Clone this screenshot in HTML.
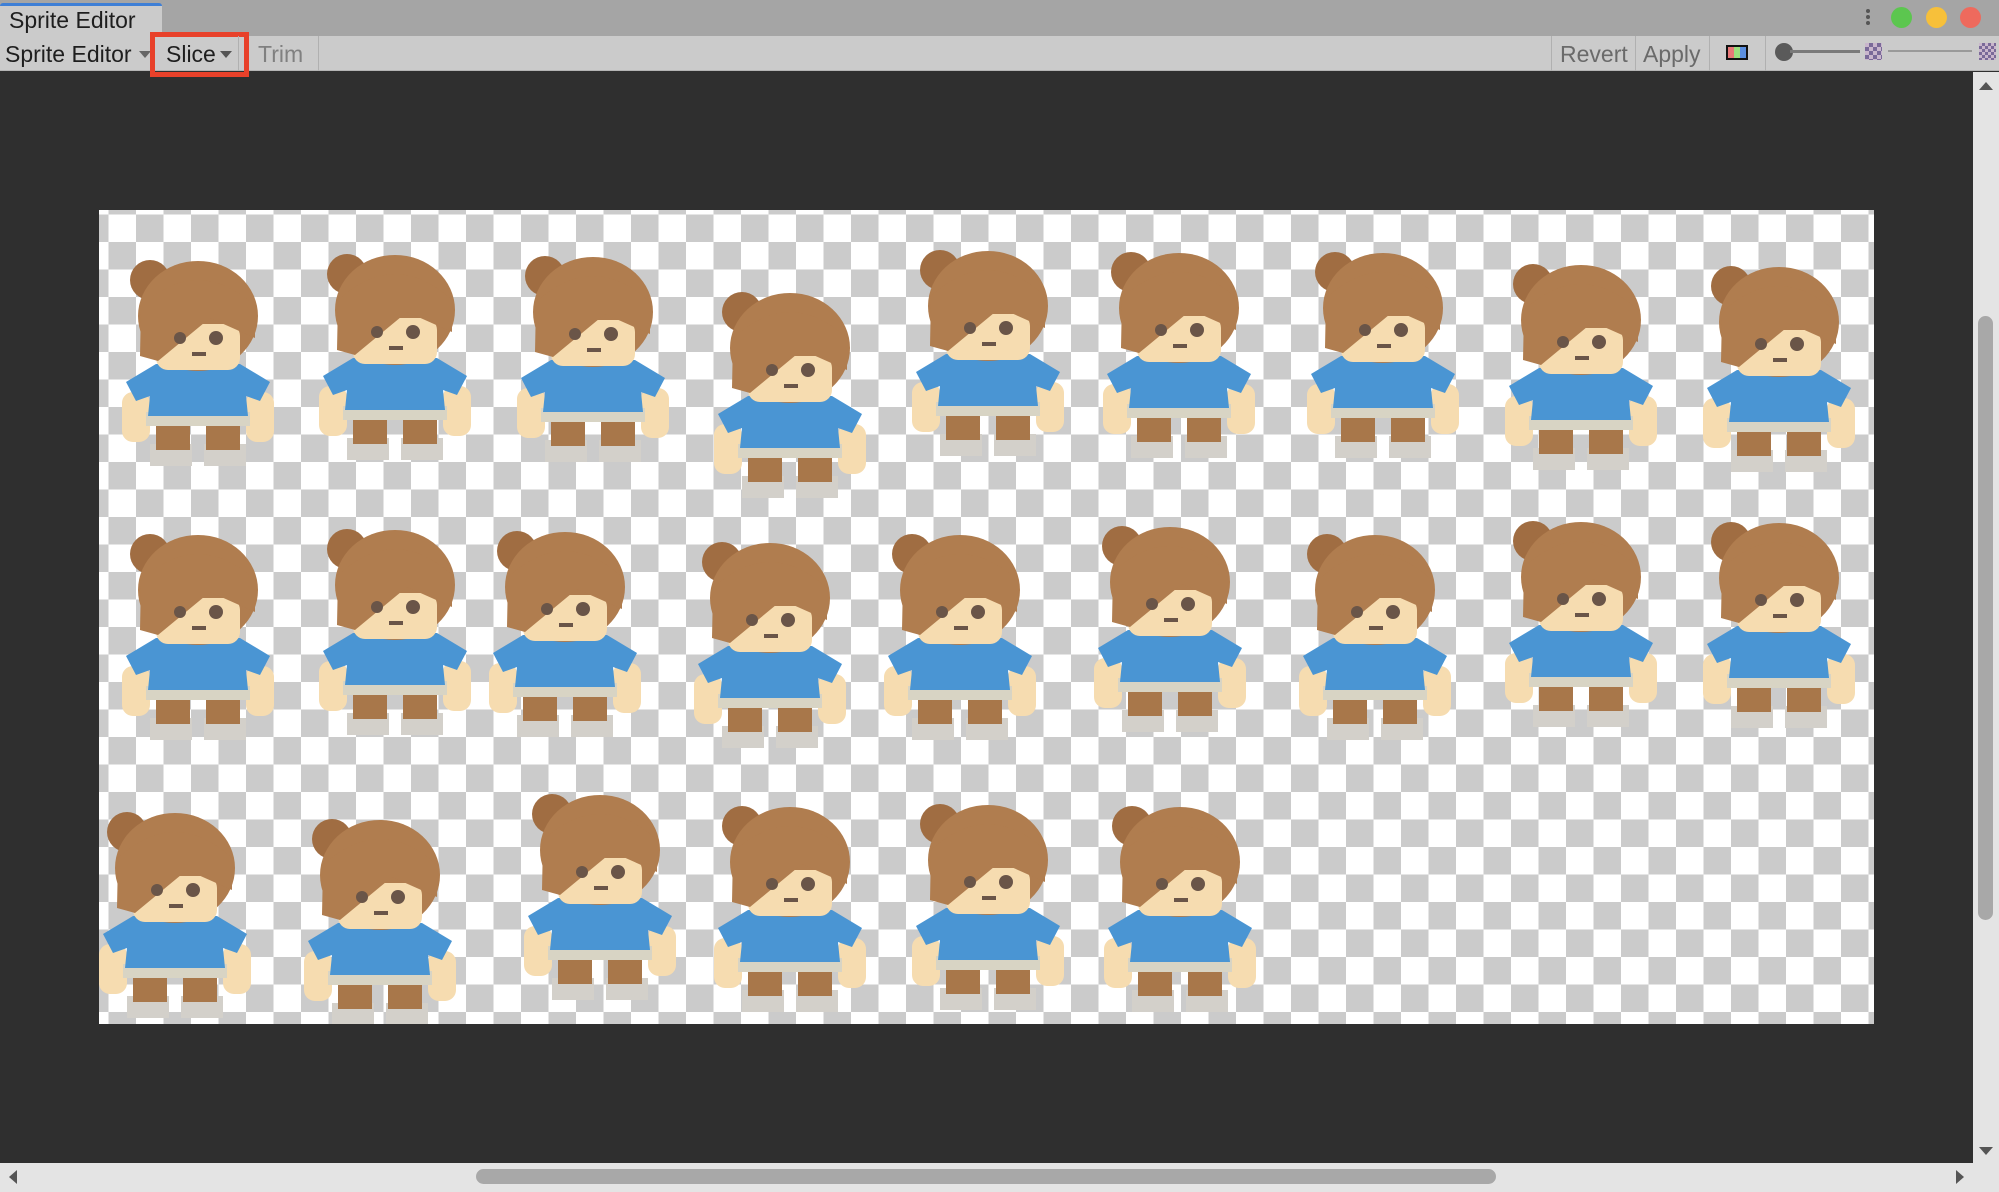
<!DOCTYPE html>
<html><head><meta charset="utf-8"><style>
*{margin:0;padding:0;box-sizing:border-box}
body{width:1999px;height:1192px;overflow:hidden;background:#2f2f2f;font-family:"Liberation Sans",sans-serif;position:relative}
.abs{position:absolute}
.t{font-size:23px;color:#1e1e1e;white-space:nowrap}
</style></head><body>
<div class="abs" style="left:0;top:0;width:1999px;height:36px;background:#a5a5a5"></div>
<div class="abs" style="left:0;top:3px;width:162px;height:34px;background:#cbcbcb;border-top:3px solid #3e7fd6;border-radius:3px 3px 0 0"></div>
<div class="abs t" style="left:9px;top:7px">Sprite Editor</div>
<div class="abs" style="left:1866px;top:9px;width:4px;height:4px;border-radius:2px;background:#555;box-shadow:0 6px 0 #555,0 12px 0 #555"></div>
<div class="abs" style="left:1891px;top:7px;width:21px;height:21px;border-radius:50%;background:#5cc64f"></div>
<div class="abs" style="left:1926px;top:7px;width:21px;height:21px;border-radius:50%;background:#f7c03a"></div>
<div class="abs" style="left:1960px;top:7px;width:21px;height:21px;border-radius:50%;background:#ee6a5d"></div>
<div class="abs" style="left:0;top:36px;width:1999px;height:35px;background:#cbcbcb;border-bottom:1px solid #b4b4b4"></div>
<div class="abs t" style="left:5px;top:41px">Sprite Editor</div>
<div class="abs" style="left:139px;top:51px;border:6px solid transparent;border-top:7px solid #666"></div>
<div class="abs" style="left:150px;top:32px;width:99px;height:45px;border:5px solid #e8412a"></div>
<div class="abs t" style="left:166px;top:41px">Slice</div>
<div class="abs" style="left:220px;top:51px;border:6px solid transparent;border-top:7px solid #555"></div>
<div class="abs" style="left:238px;top:36px;width:1px;height:35px;background:#b0b0b0"></div>
<div class="abs t" style="left:258px;top:41px;color:#808080">Trim</div>
<div class="abs" style="left:318px;top:36px;width:1px;height:35px;background:#b0b0b0"></div>
<div class="abs" style="left:1551px;top:36px;width:1px;height:35px;background:#b0b0b0"></div>
<div class="abs t" style="left:1560px;top:41px;color:#6a6a6a">Revert</div>
<div class="abs" style="left:1635px;top:36px;width:1px;height:35px;background:#b0b0b0"></div>
<div class="abs t" style="left:1643px;top:41px;color:#6a6a6a">Apply</div>
<div class="abs" style="left:1709px;top:36px;width:1px;height:35px;background:#b0b0b0"></div>
<div class="abs" style="left:1726px;top:45px;width:22px;height:15px;border:2px solid #111;background:linear-gradient(90deg,#e87878 33%,#9be07e 33% 66%,#5b8fe0 66%)"></div>
<div class="abs" style="left:1765px;top:36px;width:1px;height:35px;background:#b0b0b0"></div>
<div class="abs" style="left:1775px;top:43px;width:18px;height:18px;border-radius:50%;background:#5a5a5a"></div>
<div class="abs" style="left:1790px;top:50px;width:70px;height:3px;background:#7a7a7a"></div>
<div class="abs" style="left:1865px;top:43px;width:17px;height:17px;background:repeating-conic-gradient(#7a6a99 0 25%,#c9b6cc 0 50%) 0 0/8px 8px"></div>
<div class="abs" style="left:1888px;top:50px;width:84px;height:2px;background:#9a9a9a"></div>
<div class="abs" style="left:1979px;top:43px;width:17px;height:17px;background:repeating-conic-gradient(#7a6a99 0 25%,#c9b6cc 0 50%) 0 0/6px 6px"></div>
<div class="abs" style="left:1973px;top:72px;width:26px;height:1091px;background:#e4e4e4"></div>
<div class="abs" style="left:1979px;top:82px;border:7px solid transparent;border-bottom:8px solid #555;border-top:0"></div>
<div class="abs" style="left:1979px;top:1147px;border:7px solid transparent;border-top:8px solid #555;border-bottom:0"></div>
<div class="abs" style="left:1978px;top:316px;width:15px;height:604px;border-radius:8px;background:#a8a8a8"></div>
<div class="abs" style="left:0;top:1163px;width:1999px;height:29px;background:#e4e4e4"></div>
<div class="abs" style="left:9px;top:1170px;border:7px solid transparent;border-right:8px solid #555;border-left:0"></div>
<div class="abs" style="left:1956px;top:1170px;border:7px solid transparent;border-left:8px solid #555;border-right:0"></div>
<div class="abs" style="left:476px;top:1169px;width:1020px;height:15px;border-radius:8px;background:#a8a8a8"></div>
<div class="abs" style="left:99px;top:210px;width:1775px;height:814px;background:#fff repeating-conic-gradient(#cbcbcb 0 25%,#fff 0 50%) -18px -23px/55px 55px"></div>
<svg class="abs" style="left:99px;top:210px" width="1775" height="814">
<defs>
<g id="c">
<rect x="-48" y="178" width="42" height="22" fill="#d3d0ca"/><rect x="6" y="178" width="42" height="22" fill="#d3d0ca"/>
<rect x="-42" y="156" width="34" height="28" fill="#a8774a"/><rect x="8" y="156" width="34" height="28" fill="#a8774a"/>
<rect x="-76" y="126" width="28" height="50" rx="11" fill="#f6dcb0"/><rect x="48" y="126" width="28" height="50" rx="11" fill="#f6dcb0"/>
<rect x="-52" y="146" width="104" height="14" fill="#d8d4c4"/>
<path d="M-72 116 L-42 98 L42 98 L72 116 L62 135 L48 130 L50 150 L-50 150 L-48 130 L-62 135Z" fill="#4a95d3"/>
<circle cx="-48" cy="14" r="20" fill="#a06d42"/>
<ellipse cx="0" cy="50" rx="60" ry="55" fill="#b07d4f"/>
<rect x="-42" y="58" width="84" height="46" rx="12" fill="#f6dcb0"/>
<path d="M-57 40 Q0 -12 57 40 L57 72 L12 52 L-40 95 L-58 90Z" fill="#b07d4f"/>
<circle cx="-18" cy="72" r="6" fill="#6a5548"/><circle cx="18" cy="72" r="7" fill="#6a5548"/>
<rect x="-6" y="86" width="14" height="4" fill="#6a5548"/>
</g>
</defs>
<g transform="translate(-99,-210)">
<g transform="translate(198,266)"><use href="#c"/></g>
<g transform="translate(395,260)"><use href="#c"/></g>
<g transform="translate(593,262)"><use href="#c"/></g>
<g transform="translate(790,298)"><use href="#c"/></g>
<g transform="translate(988,256)"><use href="#c"/></g>
<g transform="translate(1179,258)"><use href="#c"/></g>
<g transform="translate(1383,258)"><use href="#c"/></g>
<g transform="translate(1581,270)"><use href="#c"/></g>
<g transform="translate(1779,272)"><use href="#c"/></g>
<g transform="translate(198,540)"><use href="#c"/></g>
<g transform="translate(395,535)"><use href="#c"/></g>
<g transform="translate(565,537)"><use href="#c"/></g>
<g transform="translate(770,548)"><use href="#c"/></g>
<g transform="translate(960,540)"><use href="#c"/></g>
<g transform="translate(1170,532)"><use href="#c"/></g>
<g transform="translate(1375,540)"><use href="#c"/></g>
<g transform="translate(1581,527)"><use href="#c"/></g>
<g transform="translate(1779,528)"><use href="#c"/></g>
<g transform="translate(175,818)"><use href="#c"/></g>
<g transform="translate(380,825)"><use href="#c"/></g>
<g transform="translate(600,800)"><use href="#c"/></g>
<g transform="translate(790,812)"><use href="#c"/></g>
<g transform="translate(988,810)"><use href="#c"/></g>
<g transform="translate(1180,812)"><use href="#c"/></g>
</g>
</svg>
</body></html>
